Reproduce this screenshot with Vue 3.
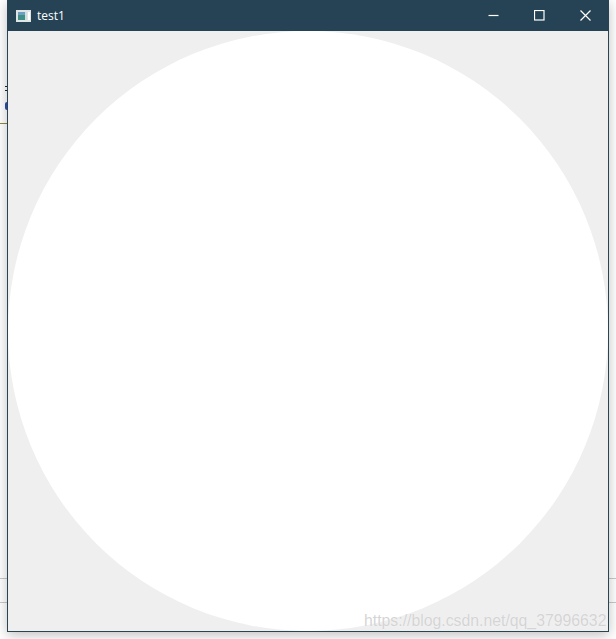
<script setup>
const title = 'test1'
const watermark = 'https://blog.csdn.net/qq_37996632'
</script>

<template>
  <div class="desktop">
    <!-- bits of the app behind the window -->
    <span class="behind-line line-a"></span>
    <span class="behind-line line-b"></span>
    <span class="behind-mark mark-dash"></span>
    <span class="behind-mark mark-dot"></span>
    <span class="behind-mark mark-tick"></span>

    <div class="window">
      <div class="titlebar">
        <svg class="app-icon" width="15" height="12" viewBox="0 0 15 12">
          <rect x="0" y="0" width="15" height="12" fill="#dfe5e6" />
          <rect x="2" y="2" width="7" height="8" fill="#3f8f86" />
          <rect x="2" y="2" width="7" height="3" fill="#6f9fc0" />
          <rect x="9" y="2" width="2" height="8" fill="#cfe0dc" />
          <rect x="12" y="2" width="2" height="8" fill="#ffffff" />
        </svg>
        <span class="title">{{ title }}</span>
        <div class="controls">
          <button class="control">
            <svg width="11" height="11" viewBox="0 0 11 11"><path d="M0.5 5.5H10.5" stroke="#fff" stroke-width="1.2" fill="none" /></svg>
          </button>
          <button class="control">
            <svg width="11" height="11" viewBox="0 0 11 11"><rect x="0.5" y="0.5" width="9.5" height="9.5" stroke="#fff" stroke-width="1.2" fill="none" /></svg>
          </button>
          <button class="control">
            <svg width="11" height="11" viewBox="0 0 11 11"><path d="M0.5 0.5L10.5 10.5M10.5 0.5L0.5 10.5" stroke="#fff" stroke-width="1.2" fill="none" /></svg>
          </button>
        </div>
      </div>
      <div class="client">
        <div class="circle"></div>
      </div>
    </div>

    <span class="watermark">{{ watermark }}</span>
  </div>
</template>

<style scoped>
.desktop {
  position: relative;
  width: 616px;
  height: 639px;
  padding-left: 7px;
  box-sizing: border-box;
  overflow: hidden;
  background: #ffffff;
  font-family: "Liberation Sans", Arial, sans-serif;
}
.window {
  position: relative;
  width: 602px;
  border: 1px solid #2a4552;
  border-top: 0;
  box-sizing: border-box;
  background: #efefef;
  box-shadow: 0 3px 12px rgba(0, 0, 0, 0.25);
}
.titlebar {
  display: flex;
  align-items: center;
  height: 31px;
  margin: 0 -1px;
  padding-left: 9px;
  padding-right: 1px;
  background: #254354;
  color: #ffffff;
}
.app-icon {
  margin-right: 6px;
}
.title {
  font-family: "Open Sans", "Liberation Sans", sans-serif;
  font-size: 12px;
}
.controls {
  display: flex;
  margin-left: auto;
}
.control {
  display: flex;
  align-items: center;
  justify-content: center;
  width: 46px;
  height: 31px;
  padding: 0;
  border: 0;
  background: none;
}
.client {
  height: 600px;
}
.circle {
  width: 600px;
  height: 600px;
  border-radius: 50%;
  background: #ffffff;
}
.behind-line {
  position: absolute;
  left: 0;
  width: 616px;
  height: 1px;
  background: #c9c9c9;
}
.line-a {
  top: 578px;
}
.line-b {
  top: 602px;
}
.behind-mark {
  position: absolute;
  left: 5px;
}
.mark-dash {
  top: 86px;
  width: 2px;
  height: 3px;
  border-top: 1px solid #222;
  border-bottom: 1px solid #222;
}
.mark-dot {
  top: 102px;
  width: 2px;
  height: 8px;
  border-radius: 2px 0 0 2px;
  background: #2f4fb5;
}
.mark-tick {
  top: 123px;
  left: 0;
  width: 7px;
  height: 1px;
  background: #8f8a3a;
}
.watermark {
  position: absolute;
  top: 612px;
  left: 364px;
  font-size: 15.8px;
  white-space: nowrap;
  color: rgba(205, 205, 205, 0.85);
  text-shadow: 0 0 1px rgba(255, 255, 255, 0.8);
}
</style>
